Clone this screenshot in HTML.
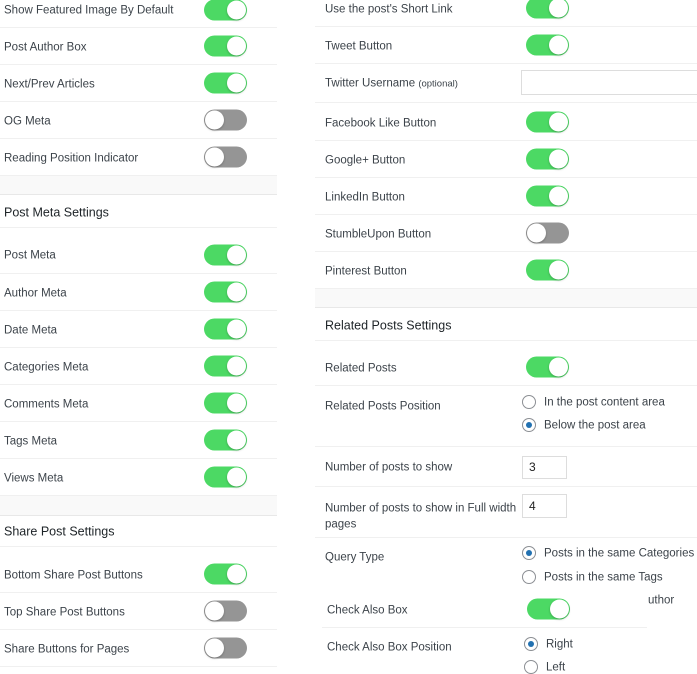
<!DOCTYPE html>
<html><head><style>
body{margin:0;width:697px;height:674px;background:#fff;position:relative;overflow:hidden;font-family:"Liberation Sans",sans-serif;font-size:11.5px;color:#3c434a}
.t{position:absolute;white-space:nowrap;transform:translateY(-45%)}
.h{font-size:12.5px;color:#1d2327}
.l{position:absolute;height:1px;background:#f0f0f0}
.band{position:absolute;background:#f9f9f9;border-top:1px solid #f0f0f0;border-bottom:1px solid #e8e8e8}
.tg{position:absolute;width:43px;height:21px;border-radius:11px;background:#4cd964;transform:translateY(-50%)}
.tg::after{content:"";position:absolute;top:1px;right:1px;width:19px;height:19px;border-radius:50%;background:#fff;box-shadow:0 1px 2px rgba(0,0,0,.25)}
.tg.off{background:#959595}
.tg.off::after{right:auto;left:1px}
.r{position:absolute;width:12px;height:12px;border:1px solid #8c8f94;border-radius:50%;background:#fff;transform:translateY(-50%)}
.r.on::after{content:"";position:absolute;left:3px;top:3px;width:6px;height:6px;border-radius:50%;background:#2271b1}
.in{position:absolute;border:1px solid #ddd;background:#fff;box-sizing:border-box;font-size:12px;padding-left:6px;color:#222}
</style></head><body>
<div class="t" style="left:4px;top:10px">Show Featured Image By Default</div><div class="tg" style="left:204px;top:10px"></div>
<div class="l" style="left:0;width:277px;top:27px"></div>
<div class="t" style="left:4px;top:47px">Post Author Box</div><div class="tg" style="left:204px;top:46px"></div>
<div class="l" style="left:0;width:277px;top:64px"></div>
<div class="t" style="left:4px;top:84px">Next/Prev Articles</div><div class="tg" style="left:204px;top:83px"></div>
<div class="l" style="left:0;width:277px;top:101px"></div>
<div class="t" style="left:4px;top:121px">OG Meta</div><div class="tg off" style="left:204px;top:120px"></div>
<div class="l" style="left:0;width:277px;top:138px"></div>
<div class="t" style="left:4px;top:158px">Reading Position Indicator</div><div class="tg off" style="left:204px;top:157px"></div>
<div class="band" style="left:0;width:277px;top:175px;height:18px"></div>
<div class="t h" style="left:4px;top:212px">Post Meta Settings</div>
<div class="l" style="left:0;width:277px;top:227px"></div>
<div class="t" style="left:4px;top:255px">Post Meta</div><div class="tg" style="left:204px;top:255px"></div>
<div class="l" style="left:0;width:277px;top:273px"></div>
<div class="t" style="left:4px;top:293px">Author Meta</div><div class="tg" style="left:204px;top:292px"></div>
<div class="l" style="left:0;width:277px;top:310px"></div>
<div class="t" style="left:4px;top:330px">Date Meta</div><div class="tg" style="left:204px;top:329px"></div>
<div class="l" style="left:0;width:277px;top:347px"></div>
<div class="t" style="left:4px;top:367px">Categories Meta</div><div class="tg" style="left:204px;top:366px"></div>
<div class="l" style="left:0;width:277px;top:384px"></div>
<div class="t" style="left:4px;top:404px">Comments Meta</div><div class="tg" style="left:204px;top:403px"></div>
<div class="l" style="left:0;width:277px;top:421px"></div>
<div class="t" style="left:4px;top:441px">Tags Meta</div><div class="tg" style="left:204px;top:440px"></div>
<div class="l" style="left:0;width:277px;top:458px"></div>
<div class="t" style="left:4px;top:478px">Views Meta</div><div class="tg" style="left:204px;top:477px"></div>
<div class="band" style="left:0;width:277px;top:495px;height:19px"></div>
<div class="t h" style="left:4px;top:531px">Share Post Settings</div>
<div class="l" style="left:0;width:277px;top:546px"></div>
<div class="t" style="left:4px;top:575px">Bottom Share Post Buttons</div><div class="tg" style="left:204px;top:574px"></div>
<div class="l" style="left:0;width:277px;top:592px"></div>
<div class="t" style="left:4px;top:612px">Top Share Post Buttons</div><div class="tg off" style="left:204px;top:611px"></div>
<div class="l" style="left:0;width:277px;top:629px"></div>
<div class="t" style="left:4px;top:649px">Share Buttons for Pages</div><div class="tg off" style="left:204px;top:648px"></div>
<div class="l" style="left:0;width:277px;top:666px"></div>
<div class="t" style="left:325px;top:9px">Use the post's Short Link</div><div class="tg" style="left:526px;top:8px"></div>
<div class="l" style="left:315px;width:382px;top:26px"></div>
<div class="t" style="left:325px;top:46px">Tweet Button</div><div class="tg" style="left:526px;top:45px"></div>
<div class="l" style="left:315px;width:382px;top:63px"></div>
<div class="t" style="left:325px;top:83px">Twitter Username <span style="font-size:9.5px">(optional)</span></div>
<div class="in" style="left:521px;top:70px;width:180px;height:25px"></div>
<div class="l" style="left:315px;width:382px;top:102px"></div>
<div class="t" style="left:325px;top:123px">Facebook Like Button</div><div class="tg" style="left:526px;top:122px"></div>
<div class="l" style="left:315px;width:382px;top:140px"></div>
<div class="t" style="left:325px;top:160px">Google+ Button</div><div class="tg" style="left:526px;top:159px"></div>
<div class="l" style="left:315px;width:382px;top:177px"></div>
<div class="t" style="left:325px;top:197px">LinkedIn Button</div><div class="tg" style="left:526px;top:196px"></div>
<div class="l" style="left:315px;width:382px;top:214px"></div>
<div class="t" style="left:325px;top:234px">StumbleUpon Button</div><div class="tg off" style="left:526px;top:233px"></div>
<div class="l" style="left:315px;width:382px;top:251px"></div>
<div class="t" style="left:325px;top:271px">Pinterest Button</div><div class="tg" style="left:526px;top:270px"></div>
<div class="band" style="left:315px;width:382px;top:288px;height:18px"></div>
<div class="t h" style="left:325px;top:325px">Related Posts Settings</div>
<div class="l" style="left:315px;width:382px;top:340px"></div>
<div class="t" style="left:325px;top:368px">Related Posts</div><div class="tg" style="left:526px;top:367px"></div>
<div class="l" style="left:315px;width:382px;top:385px"></div>
<div class="t" style="left:325px;top:406px">Related Posts Position</div>
<div class="r" style="left:522px;top:402px"></div><div class="t" style="left:544px;top:402px">In the post content area</div>
<div class="r on" style="left:522px;top:425px"></div><div class="t" style="left:544px;top:425px">Below the post area</div>
<div class="l" style="left:315px;width:382px;top:446px"></div>
<div class="t" style="left:325px;top:467px">Number of posts to show</div>
<div class="in" style="left:522px;top:456px;width:45px;height:23px;line-height:21px">3</div>
<div class="l" style="left:315px;width:382px;top:486px"></div>
<div class="t" style="left:325px;top:515px;line-height:16px">Number of posts to show in Full width<br>pages</div>
<div class="in" style="left:522px;top:494px;width:45px;height:24px;line-height:22px">4</div>
<div class="l" style="left:315px;width:382px;top:537px"></div>
<div class="t" style="left:325px;top:557px">Query Type</div>
<div class="r on" style="left:522px;top:553px"></div><div class="t" style="left:544px;top:553px">Posts in the same Categories</div>
<div class="r" style="left:522px;top:577px"></div><div class="t" style="left:544px;top:577px">Posts in the same Tags</div>
<div class="t" style="left:648px;top:600px">uthor</div>
<div class="t" style="left:327px;top:610px">Check Also Box</div><div class="tg" style="left:527px;top:609px"></div>
<div class="l" style="left:322px;width:325px;top:627px"></div>
<div class="t" style="left:327px;top:647px">Check Also Box Position</div>
<div class="r on" style="left:524px;top:644px"></div><div class="t" style="left:546px;top:644px">Right</div>
<div class="r" style="left:524px;top:667px"></div><div class="t" style="left:546px;top:667px">Left</div>
</body></html>
